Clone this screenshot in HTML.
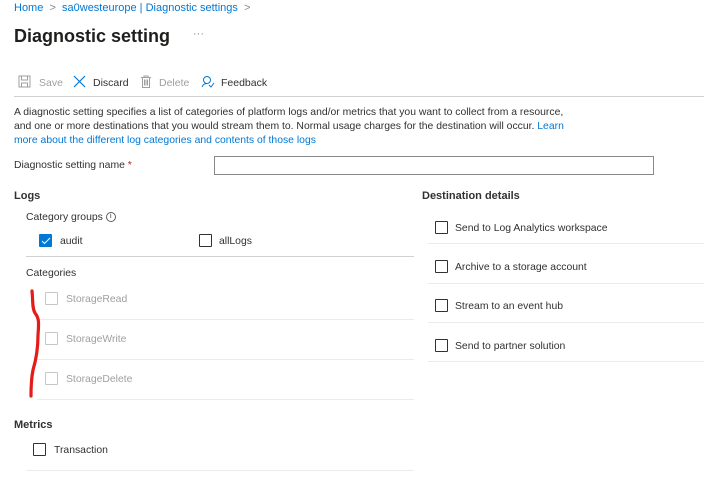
<!DOCTYPE html>
<html><head><style>
body{margin:0;width:704px;height:497px;background:#fff;font-family:"Liberation Sans",sans-serif;color:#323130;position:relative;overflow:hidden;font-size:10px}
.a{position:absolute;white-space:nowrap}
.link{color:#0078d4}
.cb{position:absolute;width:11px;height:11px;border:1px solid #323130;border-radius:1px;background:#fff}
.dis{border-color:#c8c6c4}
.hr{position:absolute;height:1px;background:#edebe9}
</style></head><body>
<div class="a link" style="left:14px;top:2px;font-size:11px">Home <span style="color:#888">&nbsp;&gt;&nbsp;</span> sa0westeurope | Diagnostic settings <span style="color:#888">&nbsp;&gt;</span></div>
<div class="a" style="left:14px;top:26px;font-size:18px;font-weight:600;color:#201f1e">Diagnostic setting</div>
<div class="a" style="left:193px;top:28px;font-size:11px;color:#888">···</div>
<svg class="a" style="left:18px;top:75px" width="13" height="13"><rect x="1" y="1" width="11" height="11" fill="none" stroke="#a19f9d"/><rect x="3.5" y="1" width="6" height="4" fill="none" stroke="#a19f9d"/><rect x="3.5" y="8" width="6" height="4" fill="none" stroke="#a19f9d"/></svg>
<div class="a" style="left:39px;top:77px;color:#a19f9d;font-size:10.5px">Save</div>
<svg class="a" style="left:73px;top:75px" width="13" height="13"><path d="M1 1L12 12M12 1L1 12" stroke="#0078d4" stroke-width="1.2"/></svg>
<div class="a" style="left:93px;top:77px;font-size:10.5px">Discard</div>
<svg class="a" style="left:140px;top:75px" width="12" height="13"><path d="M1 2.5h10M4 2.5V1h4v1.5M2.5 2.5v10h7v-10M4.5 4.5v6M6 4.5v6M7.5 4.5v6" fill="none" stroke="#a19f9d"/></svg>
<div class="a" style="left:159px;top:77px;color:#a19f9d;font-size:10.5px">Delete</div>
<svg class="a" style="left:201px;top:75px" width="14" height="13"><circle cx="6" cy="5" r="3.5" fill="none" stroke="#0078d4"/><path d="M1 12c1-3 3-3.5 5-3.5M8 10l2 2 3-4" fill="none" stroke="#0078d4"/></svg>
<div class="a" style="left:221px;top:77px;font-size:10.5px">Feedback</div>
<div class="hr" style="left:14px;top:96px;width:690px;background:#d2d0ce"></div>
<div class="a" style="left:14px;top:106px;line-height:14px;font-size:10.4px">A diagnostic setting specifies a list of categories of platform logs and/or metrics that you want to collect from a resource,<br>and one or more destinations that you would stream them to. Normal usage charges for the destination will occur. <span class="link">Learn</span><br><span class="link">more about the different log categories and contents of those logs</span></div>
<div class="a" style="left:14px;top:160px;font-size:10.4px">Diagnostic setting name <span style="color:#a4262c">*</span></div>
<div class="a" style="left:214px;top:156px;width:438px;height:17px;border:1px solid #8a8886"></div>
<div class="a" style="left:14px;top:190px;font-size:11px;font-weight:600">Logs</div>
<div class="a" style="left:26px;top:212px;font-size:10.4px">Category groups <span style="display:inline-block;width:8px;height:8px;border:1px solid #605e5c;border-radius:50%;font-size:7px;line-height:8px;text-align:center;vertical-align:middle">i</span></div>
<div class="cb" style="left:39px;top:234px;background:#0078d4;border-color:#0078d4"></div>
<svg class="a" style="left:41px;top:237px" width="10" height="8"><path d="M1 4l2.5 2.5L9 1" fill="none" stroke="#fff"/></svg>
<div class="a" style="left:60px;top:236px;font-size:10.4px">audit</div>
<div class="cb" style="left:199px;top:234px"></div>
<div class="a" style="left:219px;top:236px;font-size:10.4px">allLogs</div>
<div class="hr" style="left:26px;top:256px;width:388px;background:#d2d0ce"></div>
<div class="a" style="left:26px;top:268px;font-size:10.4px">Categories</div>
<div class="cb dis" style="left:45px;top:292px"></div><div class="a" style="left:66px;top:294px;color:#a19f9d;font-size:10.4px">StorageRead</div>
<div class="hr" style="left:37px;top:319px;width:377px"></div>
<div class="cb dis" style="left:45px;top:332px"></div><div class="a" style="left:66px;top:334px;color:#a19f9d;font-size:10.4px">StorageWrite</div>
<div class="hr" style="left:37px;top:359px;width:377px"></div>
<div class="cb dis" style="left:45px;top:372px"></div><div class="a" style="left:66px;top:374px;color:#a19f9d;font-size:10.4px">StorageDelete</div>
<div class="hr" style="left:37px;top:399px;width:377px"></div>
<svg class="a" style="left:0;top:0" width="704" height="497"><path d="M32 291C33 300 32 308 35 313C39 318 39 322 38 335C38 350 36 360 33 370C31 380 31 388 31 396" fill="none" stroke="#e41b17" stroke-width="3.2" stroke-linecap="round"/></svg>
<div class="a" style="left:14px;top:419px;font-size:11px;font-weight:600">Metrics</div>
<div class="cb" style="left:33px;top:443px"></div><div class="a" style="left:54px;top:445px;font-size:10.4px">Transaction</div>
<div class="hr" style="left:26px;top:470px;width:388px"></div>
<div class="a" style="left:422px;top:190px;font-size:11px;font-weight:600">Destination details</div>
<div class="cb" style="left:435px;top:221px"></div><div class="a" style="left:455px;top:223px;font-size:10.4px">Send to Log Analytics workspace</div>
<div class="hr" style="left:428px;top:243px;width:276px"></div>
<div class="cb" style="left:435px;top:260px"></div><div class="a" style="left:455px;top:262px;font-size:10.4px">Archive to a storage account</div>
<div class="hr" style="left:428px;top:283px;width:276px"></div>
<div class="cb" style="left:435px;top:299px"></div><div class="a" style="left:455px;top:301px;font-size:10.4px">Stream to an event hub</div>
<div class="hr" style="left:428px;top:322px;width:276px"></div>
<div class="cb" style="left:435px;top:339px"></div><div class="a" style="left:455px;top:341px;font-size:10.4px">Send to partner solution</div>
<div class="hr" style="left:428px;top:361px;width:276px"></div>
</body></html>
